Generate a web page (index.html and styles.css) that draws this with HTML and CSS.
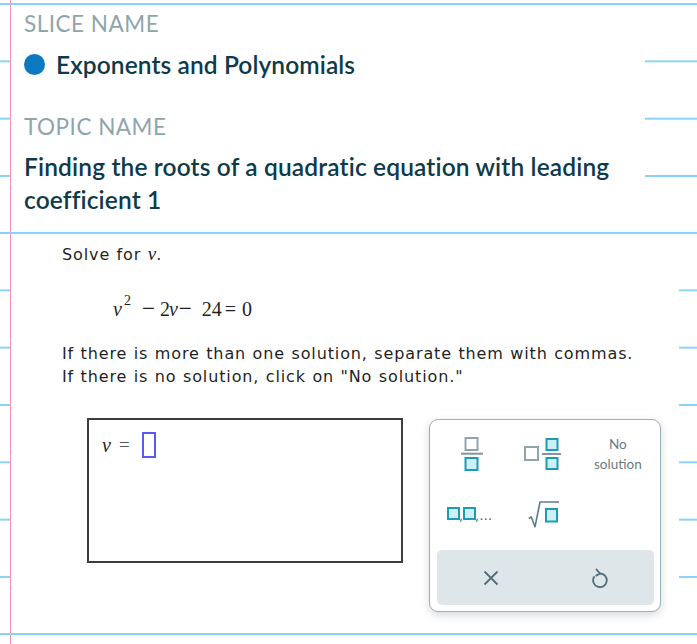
FILE: index.html
```html
<!DOCTYPE html>
<html>
<head>
<meta charset="utf-8">
<link rel="stylesheet" href="styles.css">
</head>
<body>
<div class="sheet">
  <section class="head">
    <div class="label">SLICE NAME</div>
    <div class="slice"><span class="dot"></span><span>Exponents and Polynomials</span></div>
    <div class="label topic">TOPIC NAME</div>
    <div class="title">Finding the roots of a quadratic equation with leading coefficient 1</div>
  </section>
  <section class="problem">
    <p class="q">Solve for <i class="var">v</i>.</p>
    <div class="eq"><i class="mv">v</i><span class="sup">2</span><span class="op m1">−</span><span class="n2">2</span><i class="mv v2">v</i><span class="op m2">−</span><span class="n24">24</span><span class="eqs">=</span><span class="n0">0</span></div>
    <p class="instr">If there is more than one solution, separate them with commas.<br>If there is no solution, click on "No solution."</p>
    <div class="answer-row">
      <div class="answer-box">
        <div class="ans-line"><i class="av">v</i><span class="aeq">=</span><span class="slot"></span></div>
      </div>
      <div class="keypad">
        <div class="keys">
          <div class="key">
            <svg class="i-frac" width="22" height="34" viewBox="0 0 22 34">
              <rect x="4.5" y="1" width="12" height="12" fill="#fff" stroke="#8ea5ad" stroke-width="2"/>
              <rect x="0" y="15.7" width="22" height="2" fill="#7e969e"/>
              <rect x="4.5" y="21" width="12" height="12" fill="#cdeff5" stroke="#1c9bb3" stroke-width="2"/>
            </svg>
          </div>
          <div class="key">
            <svg class="i-mixed" width="38" height="32" viewBox="0 0 38 32">
              <rect x="1" y="9" width="13" height="13" fill="#fff" stroke="#8ea5ad" stroke-width="2"/>
              <rect x="18" y="15" width="19" height="2" fill="#7e969e"/>
              <rect x="22.5" y="1" width="11" height="11" fill="#cdeff5" stroke="#1c9bb3" stroke-width="2"/>
              <rect x="22.5" y="20" width="11" height="11" fill="#cdeff5" stroke="#1c9bb3" stroke-width="2"/>
            </svg>
          </div>
          <div class="key nosol">No<br>solution</div>
          <div class="key">
            <svg class="i-list" width="46" height="16" viewBox="0 0 46 16">
              <rect x="1" y="1" width="11" height="11" fill="#cdeff5" stroke="#1c9bb3" stroke-width="2"/>
              <path d="M14.2 11.5 L14.2 13 L13.4 14.8" fill="none" stroke="#4f7580" stroke-width="1.2"/>
              <rect x="17" y="1" width="11" height="11" fill="#cdeff5" stroke="#1c9bb3" stroke-width="2"/>
              <path d="M30.2 11.5 L30.2 13 L29.4 14.8" fill="none" stroke="#4f7580" stroke-width="1.2"/>
              <circle cx="34.5" cy="12.2" r="0.9" fill="#4f7580"/>
              <circle cx="38.8" cy="12.2" r="0.9" fill="#4f7580"/>
              <circle cx="43.1" cy="12.2" r="0.9" fill="#4f7580"/>
            </svg>
          </div>
          <div class="key">
            <svg class="i-sqrt" width="31" height="27" viewBox="0 0 31 27">
              <path d="M0.8 17.5 L3.3 16 L7 25.8 L12 1 L31 1" fill="none" stroke="#5b7d86" stroke-width="1.6" stroke-linejoin="round"/>
              <rect x="18" y="8" width="11" height="12.5" fill="#cdeff5" stroke="#1c9bb3" stroke-width="2"/>
            </svg>
          </div>
          <div class="key"></div>
        </div>
        <div class="bar">
          <div class="key">
            <svg width="16" height="16" viewBox="0 0 16 16">
              <path d="M1.5 1.5 L14.5 14.5 M14.5 1.5 L1.5 14.5" stroke="#4d6f7b" stroke-width="1.8" fill="none"/>
            </svg>
          </div>
          <div class="key">
            <svg width="18" height="20" viewBox="0 0 18 20">
              <path d="M9 5.5 A6.8 6.8 0 1 1 3 9" fill="none" stroke="#4d6f7b" stroke-width="1.8" stroke-linecap="round"/>
              <path d="M5.5 1.5 L9 5.5 L5.2 7.6" fill="none" stroke="#4d6f7b" stroke-width="1.8" stroke-linecap="round" stroke-linejoin="round"/>
            </svg>
          </div>
        </div>
      </div>
    </div>
  </section>
</div>
</body>
</html>
```
FILE: styles.css
```css
* { box-sizing: border-box; }
body { margin: 0; background: #fff; }

.sheet {
  width: 697px;
  height: 644px;
  padding-top: 3px;
  overflow: hidden;
  background: linear-gradient(to right, transparent 10px, #f590b4 10px, #f590b4 11.5px, transparent 11.5px);
}

.head {
  height: 231px;
  border-top: 2px solid #8ad3f6;
  border-bottom: 2px solid #8ad3f6;
  padding: 6px 60px 0 24px;
  background-image:
    linear-gradient(to bottom, transparent 55px, #8ad3f6 55px, #8ad3f6 57px, transparent 57px),
    linear-gradient(to bottom, transparent 55px, #8ad3f6 55px, #8ad3f6 57px, transparent 57px);
  background-size: 10px 57.33px, 52px 57.33px;
  background-position: left top, right top;
  background-repeat: repeat-y;
}

.label {
  font: 400 22.5px/26px Lato, sans-serif;
  letter-spacing: 0.5px;
  color: #8fa5ad;
}
.slice {
  display: flex;
  align-items: center;
  gap: 11px;
  margin-top: 12.5px;
  font: 600 24.5px/30px Lato, sans-serif;
  letter-spacing: 0.1px;
  color: #0e3b4a;
}
.dot {
  flex: none;
  width: 21px;
  height: 21px;
  border-radius: 50%;
  background: #0b79c0;
}
.topic { margin-top: 34px; }
.title {
  margin-top: 10.5px;
  font: 600 24.5px/33px Lato, sans-serif;
  letter-spacing: 0.15px;
  color: #0e3b4a;
}

.problem {
  height: 401px;
  border-bottom: 2px solid #8ad3f6;
  padding: 9px 0 0 62px;
  background-image:
    linear-gradient(to bottom, transparent 55px, #8ad3f6 55px, #8ad3f6 57px, transparent 57px),
    linear-gradient(to bottom, transparent 55px, #8ad3f6 55px, #8ad3f6 57px, transparent 57px);
  background-size: 10px 57.33px, 18px 57.33px;
  background-position: left top, right top;
  background-repeat: repeat-y;
  color: #1f1f1f;
}
.q, .instr {
  margin: 0;
  font: 400 16px/23px "DejaVu Sans", sans-serif;
  letter-spacing: 0.88px;
  word-spacing: 0.5px;
}
.var { font: italic 19px "Liberation Serif", serif; letter-spacing: 0; }

.eq {
  margin-top: 27.5px;
  padding-left: 51px;
  font: 400 20px/30px "Liberation Serif", serif;
  white-space: nowrap;
}
.mv { font-style: italic; }
.sup { font-size: 14px; line-height: 0; vertical-align: 11px; margin-left: 2px; }
.op { font-size: 23px; line-height: 0; }
.m1 { margin-left: 11px; }
.n2 { margin-left: 5px; }
.v2 { margin-left: -1px; }
.m2 { margin-left: 1px; }
.n24 { margin-left: 10px; }
.eqs { margin-left: 3px; }
.n0 { margin-left: 6px; }

.instr { margin-top: 18.7px; }

.answer-row {
  display: flex;
  align-items: flex-start;
  gap: 26px;
  margin-top: 30px;
  padding-left: 25px;
}
.answer-box {
  width: 316px;
  height: 145px;
  border: 2px solid #3d3d3d;
  padding: 12px 0 0 13px;
}
.ans-line {
  display: flex;
  align-items: center;
  height: 26px;
}
.av { font: italic 20px/26px "Liberation Serif", serif; color: #222; }
.aeq { font: 400 19px/26px "Liberation Serif", serif; color: #555; margin-left: 8px; }
.slot {
  width: 14px;
  height: 26px;
  border: 2px solid #5858f5;
  margin-left: 12px;
}

.keypad {
  margin-top: 1px;
  width: 232px;
  height: 193px;
  border: 1px solid #9bb0b7;
  border-radius: 9px;
  padding: 3px 6px 6px 7px;
  background: #fff;
  box-shadow: 0 3px 8px rgba(40, 60, 70, 0.2);
  display: flex;
  flex-direction: column;
  gap: 5px;
}
.keys {
  display: grid;
  grid-template-columns: repeat(3, 1fr);
  grid-template-rows: 61px 61px;
}
.key {
  display: flex;
  align-items: center;
  justify-content: center;
}
.i-frac { margin-right: 3px; }
.i-mixed { margin-right: 4px; }
.i-list { margin-right: 7px; }
.i-sqrt { margin-right: 3px; }
.nosol {
  font: 400 13.5px/20px Lato, sans-serif;
  color: #687c85;
  text-align: center;
}
.bar {
  height: 55px;
  background: #dfe6e9;
  border-radius: 5px;
  display: grid;
  grid-template-columns: 1fr 1fr;
}
```
